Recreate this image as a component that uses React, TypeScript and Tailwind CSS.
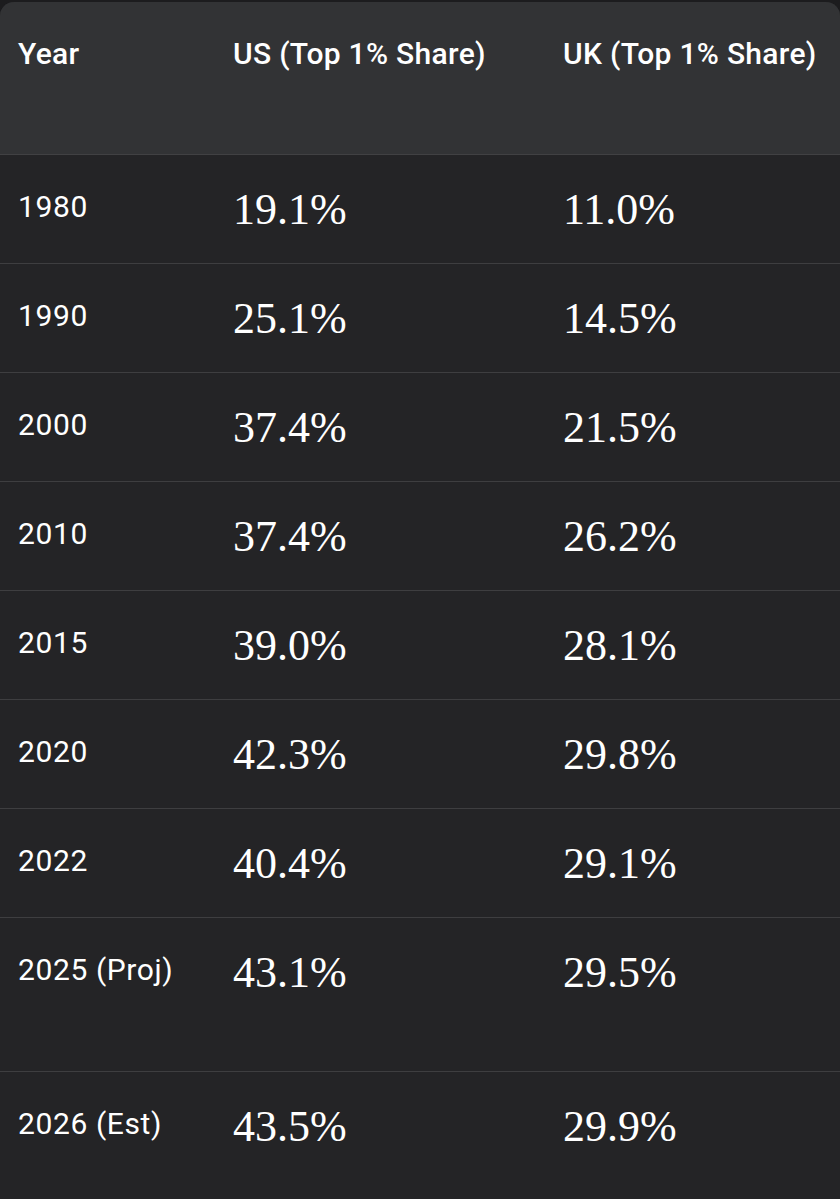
const rows = [
  { year: "1980", us: "19.1%", uk: "11.0%" },
  { year: "1990", us: "25.1%", uk: "14.5%" },
  { year: "2000", us: "37.4%", uk: "21.5%" },
  { year: "2010", us: "37.4%", uk: "26.2%" },
  { year: "2015", us: "39.0%", uk: "28.1%" },
  { year: "2020", us: "42.3%", uk: "29.8%" },
  { year: "2022", us: "40.4%", uk: "29.1%" },
  { year: "2025 (Proj)", us: "43.1%", uk: "29.5%", tall: true },
  { year: "2026 (Est)", us: "43.5%", uk: "29.9%", last: true },
];

const sans = "font-['Roboto','Liberation_Sans',sans-serif]";
const serif = "font-['Liberation_Serif','DejaVu_Serif',serif]";

export default function App() {
  return (
    <div className="min-h-[1199px] w-[840px] bg-[#1c1c1e] pt-[2px] overflow-hidden">
      <div className="rounded-t-[14px] overflow-hidden bg-[#242426]">
        <div
          className={`grid grid-cols-[215px_330px_1fr] h-[153px] bg-[#323335] border-b border-[#414143] text-white text-[30px] leading-[36px] font-medium tracking-[0.3px] ${sans}`}
        >
          <div className="pl-[18px] pt-[34px]">Year</div>
          <div className="pl-[18px] pt-[34px] whitespace-nowrap">US (Top 1% Share)</div>
          <div className="pl-[18px] pt-[34px] whitespace-nowrap">UK (Top 1% Share)</div>
        </div>
        {rows.map((row, i) => (
          <div
            key={i}
            className={`grid grid-cols-[215px_330px_1fr] text-white ${
              row.tall ? "h-[154px]" : row.last ? "h-[130px]" : "h-[109px]"
            } ${row.last ? "" : "border-b border-[#3e3e40]"}`}
          >
            <div className={`pl-[18px] pt-[34px] text-[30px] leading-[36px] tracking-[0.6px] whitespace-nowrap ${sans}`}>
              {row.year}
            </div>
            <div className={`pl-[18px] pt-[33px] text-[44px] leading-[44px] ${serif}`}>
              {row.us}
            </div>
            <div className={`pl-[18px] pt-[33px] text-[44px] leading-[44px] ${serif}`}>
              {row.uk}
            </div>
          </div>
        ))}
      </div>
    </div>
  );
}
